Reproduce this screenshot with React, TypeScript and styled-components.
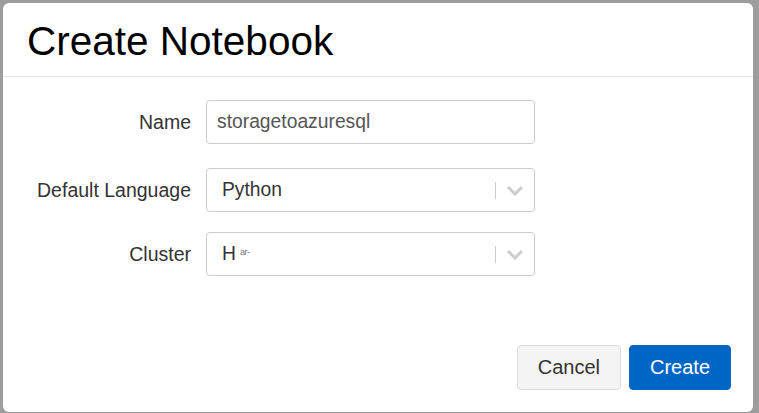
import styled, { createGlobalStyle } from "styled-components";

const GlobalStyle = createGlobalStyle`
  html, body {
    margin: 0;
    padding: 0;
    background: #9d9d9d;
    font-family: "Liberation Sans", Arial, sans-serif;
  }
`;

const Backdrop = styled.div`
  width: 759px;
  height: 413px;
  padding: 3px 6px 1px 3px;
  box-sizing: border-box;
`;

const Dialog = styled.div`
  background: #fff;
  border-radius: 6px;
  height: 100%;
  display: flex;
  flex-direction: column;
`;

const Header = styled.div`
  height: 74px;
  border-bottom: 1px solid #e5e5e5;
  display: flex;
  align-items: center;
  padding-left: 24px;
  box-sizing: border-box;
  flex: none;
`;

const Title = styled.h1`
  margin: 0;
  font-size: 40.5px;
  font-weight: 400;
  color: #000;
  padding-top: 3px;
`;

const Body = styled.div`
  flex: 1;
  padding-top: 23px;
`;

const Row = styled.div<{ $gap: number }>`
  display: grid;
  grid-template-columns: 188px 329px;
  column-gap: 15px;
  align-items: center;
  margin-bottom: ${(p) => p.$gap}px;
`;

const Label = styled.label`
  text-align: right;
  font-size: 19.5px;
  color: #333;
`;

const TextInput = styled.input`
  height: 44px;
  box-sizing: border-box;
  border: 1px solid #ccc;
  border-radius: 4px;
  padding: 0 10px;
  font-family: inherit;
  font-size: 19.3px;
  color: #555;
  outline: none;
`;

const SelectBox = styled.div`
  height: 44px;
  box-sizing: border-box;
  border: 1px solid #ccc;
  border-radius: 4px;
  display: flex;
  align-items: center;
  padding-left: 15px;
`;

const SelectValue = styled.span`
  flex: 1;
  font-size: 19.3px;
  color: #333;
`;

const Faded = styled.span`
  font-size: 9px;
  color: #777;
  vertical-align: 5px;
  margin-left: 4px;
  letter-spacing: -0.5px;
`;

const Separator = styled.span`
  width: 1px;
  height: 17px;
  background: #ccc;
`;

const Arrow = styled.span`
  width: 38px;
  display: flex;
  justify-content: center;
  align-items: center;
`;

const Footer = styled.div`
  display: flex;
  justify-content: flex-end;
  gap: 8px;
  padding: 0 22px 22px 0;
`;

const Button = styled.button<{ $primary?: boolean }>`
  height: 45px;
  padding: 0 20px;
  border-radius: 4px;
  font-family: inherit;
  font-size: 20px;
  border: 1px solid ${(p) => (p.$primary ? "#0066c6" : "#dcdcdc")};
  background: ${(p) => (p.$primary ? "#0066c6" : "#f4f4f4")};
  color: ${(p) => (p.$primary ? "#fff" : "#333")};
`;

const Chevron = () => (
  <svg width="18" height="11" viewBox="0 0 18 11">
    <path d="M2 2 L9 9 L16 2" fill="none" stroke="#ccc" strokeWidth="3" />
  </svg>
);

const Select = ({ children }: { children: React.ReactNode }) => (
  <SelectBox>
    <SelectValue>{children}</SelectValue>
    <Separator />
    <Arrow>
      <Chevron />
    </Arrow>
  </SelectBox>
);

export default function App() {
  return (
    <>
      <GlobalStyle />
      <Backdrop>
        <Dialog>
          <Header>
            <Title>Create Notebook</Title>
          </Header>
          <Body>
            <Row $gap={24}>
              <Label>Name</Label>
              <TextInput defaultValue="storagetoazuresql" />
            </Row>
            <Row $gap={20}>
              <Label>Default Language</Label>
              <Select>Python</Select>
            </Row>
            <Row $gap={0}>
              <Label>Cluster</Label>
              <Select>
                H<Faded>ar-</Faded>
              </Select>
            </Row>
          </Body>
          <Footer>
            <Button>Cancel</Button>
            <Button $primary>Create</Button>
          </Footer>
        </Dialog>
      </Backdrop>
    </>
  );
}
